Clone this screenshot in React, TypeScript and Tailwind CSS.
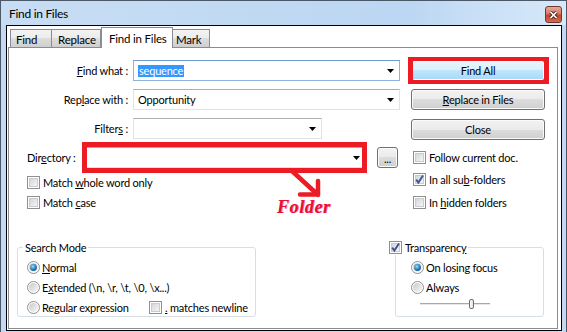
import React from "react";

function Defs() {
  return (
    <svg width="0" height="0" className="absolute">
      <defs>
        <linearGradient id="radioBg" x1="0" y1="0" x2="1" y2="1">
          <stop offset="0" stopColor="#c9c9c9" />
          <stop offset="1" stopColor="#f7f7f7" />
        </linearGradient>
        <radialGradient id="radioDot" cx="0.4" cy="0.35" r="0.7">
          <stop offset="0" stopColor="#9fdcfb" />
          <stop offset="0.55" stopColor="#2f8ac7" />
          <stop offset="1" stopColor="#0d4f82" />
        </radialGradient>
      </defs>
    </svg>
  );
}

function Checkbox({ checked }: { checked?: boolean }) {
  return (
    <span className="relative block w-[13px] h-[13px] shrink-0 border border-[#8e8f8f] bg-white p-px">
      <span className="block w-full h-full border border-[#c9cbd0] bg-[linear-gradient(135deg,#d4d6d9,#f5f5f5)]" />
      {checked && (
        <svg className="absolute left-0 top-0" width="11" height="11" viewBox="0 0 11 11">
          <path d="M2.2 5.6 L4.4 8.6 L9 1.6" fill="none" stroke="#3f5391" strokeWidth="1.9" />
        </svg>
      )}
    </span>
  );
}

function Radio({ checked }: { checked?: boolean }) {
  return (
    <svg width="13" height="13" viewBox="0 0 13 13" className="shrink-0">
      <circle cx="6.5" cy="6.5" r="6" fill="#fff" stroke="#8e8f8f" />
      <circle cx="6.5" cy="6.5" r="4.5" fill="url(#radioBg)" />
      {checked && <circle cx="6.5" cy="6.5" r="3.4" fill="url(#radioDot)" />}
    </svg>
  );
}

function Arrow() {
  return (
    <div className="flex w-[17px] items-center justify-center">
      <svg width="7" height="4" viewBox="0 0 7 4">
        <path d="M0 0 H7 L3.5 4 Z" fill="#000" />
      </svg>
    </div>
  );
}

function Combo({
  className,
  focused,
  children,
}: {
  className: string;
  focused?: boolean;
  children?: React.ReactNode;
}) {
  return (
    <div
      className={`flex h-[21px] items-center bg-white border ${
        focused
          ? "border-[#8fb3dc] border-t-[#6e9ccf]"
          : "border-[#dfe3e8] border-t-[#abadb3]"
      } ${className}`}
    >
      <div className="flex-1 pl-[4px]">{children}</div>
      <Arrow />
    </div>
  );
}

function Btn({
  children,
  primary,
  className = "",
}: {
  children: React.ReactNode;
  primary?: boolean;
  className?: string;
}) {
  return (
    <div
      className={`flex items-center justify-center h-[21px] rounded-[3px] border ${
        primary
          ? "border-[#3c7fb1] bg-[linear-gradient(#eaf6fd,#d9f0fc_50%,#bee6fd_50%,#a7d9f5)]"
          : "border-[#707070] bg-[linear-gradient(#f2f2f2,#ebebeb_50%,#dddddd_50%,#cfcfcf)]"
      } shadow-[inset_0_0_0_1px_#fbfbfb] ${className}`}
    >
      {children}
    </div>
  );
}

function CheckRow({
  children,
  checked,
  className = "",
}: {
  children: React.ReactNode;
  checked?: boolean;
  className?: string;
}) {
  return (
    <div className={`flex items-center gap-[3px] whitespace-nowrap ${className}`}>
      <Checkbox checked={checked} />
      <span>{children}</span>
    </div>
  );
}

function RadioRow({
  children,
  checked,
}: {
  children: React.ReactNode;
  checked?: boolean;
}) {
  return (
    <div className="flex items-center h-[20px] gap-[2px] whitespace-nowrap">
      <Radio checked={checked} />
      {children}
    </div>
  );
}

export default function App() {
  return (
    <div className="relative w-[567px] h-[332px] overflow-hidden border-t border-l border-r border-[#4b5868] bg-[#c2d9f1] font-['Lato',sans-serif] text-[11px] tracking-[-0.2px] leading-[15px] text-black">
      <Defs />

      {/* title bar */}
      <div className="flex h-[24px] bg-[linear-gradient(90deg,#c7ddf4,#bcd7f3_72%,#d8e9fa)] pl-[8px] pr-[4px]">
        <span className="pt-[5px] text-[12px] tracking-[-0.3px]">Find in Files</span>
        <div className="ml-auto self-start mt-[5px] flex w-[17px] h-[17px] items-center justify-center rounded-[3px] border border-[#6b3a33] bg-[linear-gradient(#eaaa9b,#d8785f_45%,#c4452c_55%,#d6694d)]">
          <svg width="9" height="8" viewBox="0 0 9 8">
            <path d="M1.5 1 L7.5 7 M7.5 1 L1.5 7" stroke="#3b2320" strokeWidth="3.4" />
            <path d="M1.5 1 L7.5 7 M7.5 1 L1.5 7" stroke="#fff" strokeWidth="1.7" />
          </svg>
        </div>
      </div>

      {/* client area */}
      <div className="ml-[5px] w-[556px] h-[306px] border border-black bg-white">
        {/* tabs */}
        <div className="flex items-end h-[21px] pl-[3px] text-[11.5px]">
          <div className="h-[18px] w-[42px] border border-b-0 border-[#898c95] bg-[linear-gradient(#f3f3f3,#ebebeb_50%,#dddddd_50%,#cfcfcf)] pl-[5px] pt-[2px]">
            Find
          </div>
          <div className="h-[18px] w-[49px] border border-b-0 border-l-0 border-[#898c95] bg-[linear-gradient(#f3f3f3,#ebebeb_50%,#dddddd_50%,#cfcfcf)] pl-[6px] pt-[2px]">
            Replace
          </div>
          <div className="relative z-10 -mb-px h-[21px] w-[72px] border border-b-0 border-[#898c95] bg-white pl-[7px] pt-[3px]">
            Find in Files
          </div>
          <div className="h-[18px] w-[37px] border border-b-0 border-l-0 border-[#898c95] bg-[linear-gradient(#f3f3f3,#ebebeb_50%,#dddddd_50%,#cfcfcf)] pl-[3px] pt-[2px]">
            Mark
          </div>
        </div>

        {/* tab panel */}
        <div className="ml-px w-[550px] h-[282px] border border-[#898c95] bg-white">
          <div className="flex pt-[12px]">
            {/* left column */}
            <div className="w-[391px] flex flex-col">
              <div className="flex items-center h-[21px]">
                <span className="w-[119px] text-right">
                  <u>F</u>ind what :
                </span>
                <Combo className="ml-[5px] w-[267px]" focused>
                  <span className="bg-[#3399ff] px-px text-white leading-[12px] inline-block">
                    sequence
                  </span>
                </Combo>
              </div>
              <div className="flex items-center h-[21px] mt-[8px]">
                <span className="w-[119px] text-right">
                  Rep<u>l</u>ace with :
                </span>
                <Combo className="ml-[5px] w-[267px]">Opportunity</Combo>
              </div>
              <div className="flex items-center h-[21px] mt-[8px]">
                <span className="w-[119px] text-right">
                  Filter<u>s</u> :
                </span>
                <Combo className="ml-[5px] w-[189px]" />
              </div>
              <div className="flex items-center h-[21px] mt-[8px] pl-[18px]">
                <span className="w-[59px]">
                  Dir<u>e</u>ctory :
                </span>
                <Combo className="w-[280px]" />
                <Btn className="ml-[11px] w-[21px] h-[19px] items-end pb-[3px] leading-none">
                  ...
                </Btn>
              </div>
              <CheckRow className="h-[20px] mt-[4px] pl-[18px]">
                Match <u>w</u>hole word only
              </CheckRow>
              <CheckRow className="h-[20px] pl-[18px]">
                Match <u>c</u>ase
              </CheckRow>
            </div>

            {/* right column */}
            <div className="ml-[11px] w-[134px] flex flex-col">
              <Btn primary>Find All</Btn>
              <Btn className="mt-[8px]">
                <span>
                  <u>R</u>eplace in Files
                </span>
              </Btn>
              <Btn className="mt-[9px]">Close</Btn>
              <CheckRow className="h-[22px] mt-[6px] pl-[2px]">
                Follow current doc.
              </CheckRow>
              <CheckRow className="h-[23px] pl-[2px]" checked>
                In all su<u>b</u>-folders
              </CheckRow>
              <CheckRow className="h-[23px] pl-[2px]">
                In <u>h</u>idden folders
              </CheckRow>
            </div>
          </div>

          {/* bottom groups */}
          <div className="flex mt-[33px] pl-[8px]">
            <div className="relative w-[239px] h-[70px] rounded-[3px] border border-[#d5dfe5] pl-[9px] pt-[9px]">
              <span className="absolute -top-[8px] left-[5px] bg-white px-[2px]">
                Search Mode
              </span>
              <RadioRow checked>
                <span>
                  <u>N</u>ormal
                </span>
              </RadioRow>
              <RadioRow>
                <span>
                  E<u>x</u>tended (\n, \r, \t, \0, \x...)
                </span>
              </RadioRow>
              <RadioRow>
                <span className="w-[105px] shrink-0">
                  Re<u>g</u>ular expression
                </span>
                <CheckRow>
                  <u>.</u> matches newline
                </CheckRow>
              </RadioRow>
            </div>

            <div className="relative ml-[139px] w-[149px] h-[70px] rounded-[3px] border border-[#d5dfe5] pl-[15px] pt-[9px]">
              <div className="absolute -top-[8px] -left-[7px] flex items-center gap-[3px] bg-white pr-[2px]">
                <Checkbox checked />
                <span>
                  Transparenc<u>y</u>
                </span>
              </div>
              <RadioRow checked>
                <span>On losing focus</span>
              </RadioRow>
              <RadioRow>
                <span>Always</span>
              </RadioRow>
              <div className="relative ml-[9px] h-[14px] w-[70px]">
                <div className="absolute left-0 right-0 top-[6px] h-[2px] border-t border-[#a9a9a9] bg-[#e7e7e7]" />
                <div className="absolute left-[49px] top-[2px] h-[10px] w-[5px] rounded-[2px] border border-[#6f6f6f] bg-[linear-gradient(90deg,#ffffff,#e0e0e0)]" />
              </div>
            </div>
          </div>
        </div>
      </div>

      {/* red annotations drawn over the dialog */}
      <div className="absolute left-[407px] top-[56px] w-[141px] h-[27px] border-x-[5px] border-y-4 border-[#ed1c24]" />
      <div className="absolute left-[81px] top-[141px] w-[285px] h-[31px] border-[5px] border-[#ed1c24]" />
      <svg
        className="absolute left-[284px] top-[164px]"
        width="40"
        height="36"
        viewBox="0 0 40 36"
      >
        <path
          d="M7 6 L31 28 M15 29.5 L33 29.5 M33 16 L33 30"
          fill="none"
          stroke="#ed1c24"
          strokeWidth="4.5"
          strokeLinecap="round"
        />
      </svg>
      <span className="absolute left-[276px] top-[196px] font-['Liberation_Serif',serif] text-[18px] leading-[20px] font-bold italic tracking-[0.6px] text-[#e8112d] [text-shadow:1px_0_0_#ff6fb0]">
        Folder
      </span>
    </div>
  );
}
